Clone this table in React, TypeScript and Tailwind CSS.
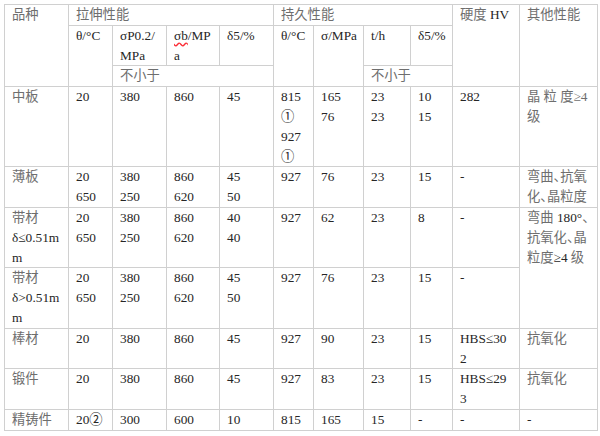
import type { ReactNode } from 'react';

function Td({
    children,
    rowSpan,
    colSpan
}: {
    children?: ReactNode;
    rowSpan?: number;
    colSpan?: number;
}) {
    return (
        <td
            rowSpan={rowSpan}
            colSpan={colSpan}
            className="border border-[#d0d0d0] px-[7px] py-0 align-top whitespace-nowrap"
        >
            {children}
        </td>
    );
}

// Chinese text renders lighter and thinner in the source
const Cn = ({ children }: { children: ReactNode }) => (
    <span className="text-[#6e6e6e]">{children}</span>
);

// half-width punctuation, like Word's compression of 、
const Halt = ({ children }: { children: ReactNode }) => (
    <span className="text-[#6e6e6e] [font-feature-settings:'halt']">{children}</span>
);

type Row = { cells: ReactNode[]; other?: ReactNode; otherSpan?: number };

const rows: Row[] = [
    {
        cells: [<Cn>中板</Cn>, '20', '380', '860', '45', <>815<br />①<br />927<br />①</>, <>165<br />76</>, <>23<br />23</>, <>10<br />15</>, '282'],
        other: <Cn>晶 粒 度≥4<br />级</Cn>
    },
    {
        cells: [<Cn>薄板</Cn>, <>20<br />650</>, <>380<br />250</>, <>860<br />620</>, <>45<br />50</>, '927', '76', '23', '15', '-'],
        other: <Halt>弯曲、抗氧<br />化、晶粒度</Halt>
    },
    {
        cells: [<><Cn>带材</Cn><br />δ≤0.51m<br />m</>, <>20<br />650</>, <>380<br />250</>, <>860<br />620</>, <>40<br />40</>, '927', '62', '23', '8', '-'],
        other: <Halt>弯曲 <span className="text-[#262626]">180°</span>、<br />抗氧化、晶<br />粒度<span className="text-[#262626]">≥4</span> 级</Halt>,
        otherSpan: 2
    },
    {
        cells: [<><Cn>带材</Cn><br />δ&gt;0.51m<br />m</>, <>20<br />650</>, <>380<br />250</>, <>860<br />620</>, <>45<br />50</>, '927', '76', '23', '15', '-']
    },
    {
        cells: [<Cn>棒材</Cn>, '20', '380', '860', '45', '927', '90', '23', '15', <>HBS≤30<br />2</>],
        other: <Cn>抗氧化</Cn>
    },
    {
        cells: [<Cn>锻件</Cn>, '20', '380', '860', '45', '927', '83', '23', '15', <>HBS≤29<br />3</>],
        other: <Cn>抗氧化</Cn>
    },
    {
        cells: [<Cn>精铸件</Cn>, '20②', '300', '600', '10', '815', '165', '15', '-', '-'],
        other: '-'
    }
];

export default function App() {
    return (
        <div className="w-[600px] h-[436px] bg-white pl-[4px] pt-[4px] text-[#262626] text-[13.3px] leading-[19.8px] font-['Liberation_Serif','Noto_Sans_CJK_SC',serif]">
            <table className="table-fixed border-collapse w-[593px]">
                <colgroup>
                    <col className="w-[64px]" />
                    <col className="w-[44px]" />
                    <col className="w-[54px]" />
                    <col className="w-[53px]" />
                    <col className="w-[54px]" />
                    <col className="w-[40px]" />
                    <col className="w-[50px]" />
                    <col className="w-[47px]" />
                    <col className="w-[42px]" />
                    <col className="w-[67px]" />
                    <col className="w-[78px]" />
                </colgroup>
                <thead>
                    <tr>
                        <Td rowSpan={3}><Cn>品种</Cn></Td>
                        <Td colSpan={4}><Cn>拉伸性能</Cn></Td>
                        <Td colSpan={4}><Cn>持久性能</Cn></Td>
                        <Td rowSpan={3}><Cn>硬度</Cn> HV</Td>
                        <Td rowSpan={3}><Cn>其他性能</Cn></Td>
                    </tr>
                    <tr>
                        <Td rowSpan={2}>θ/°C</Td>
                        <Td>σP0.2/<br />MPa</Td>
                        <Td>
                            <span className="underline decoration-wavy decoration-red-500 underline-offset-2">σb</span>/MP<br />a
                        </Td>
                        <Td>δ5/%</Td>
                        <Td rowSpan={2}>θ/°C</Td>
                        <Td rowSpan={2}>σ/MPa</Td>
                        <Td>t/h</Td>
                        <Td>δ5/%</Td>
                    </tr>
                    <tr>
                        <Td colSpan={3}><Cn>不小于</Cn></Td>
                        <Td colSpan={2}><Cn>不小于</Cn></Td>
                    </tr>
                </thead>
                <tbody>
                    {rows.map((row, i) => (
                        <tr key={i}>
                            {row.cells.map((c, j) => (
                                <Td key={j}>{c}</Td>
                            ))}
                            {row.other !== undefined && <Td rowSpan={row.otherSpan}>{row.other}</Td>}
                        </tr>
                    ))}
                </tbody>
            </table>
        </div>
    );
}
